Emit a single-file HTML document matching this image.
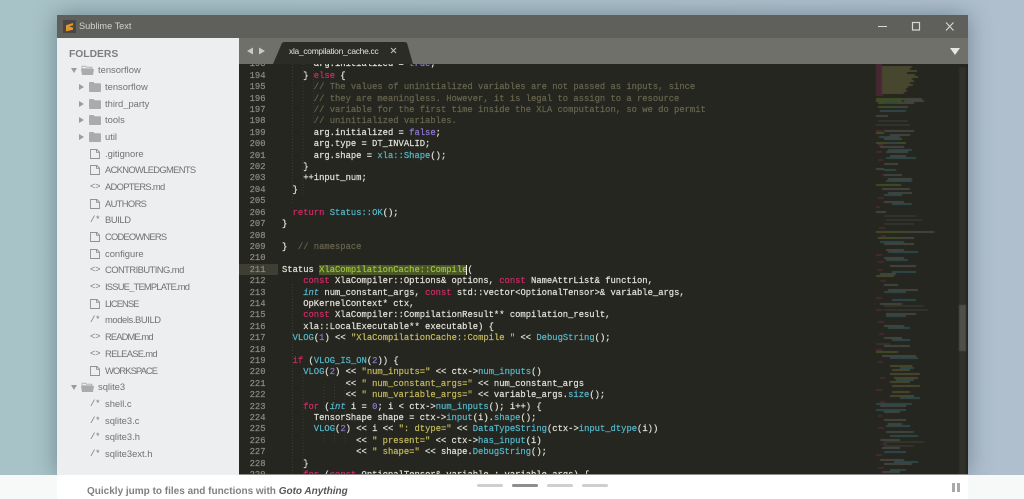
<!DOCTYPE html>
<html><head><meta charset="utf-8"><title>Sublime Text</title>
<style>
html,body{margin:0;padding:0}
body{width:1024px;height:499px;overflow:hidden;position:relative;background:linear-gradient(90deg,#a8c3c8 0,#aac1c9 40%,#b0bfce 100%);font-family:"Liberation Sans",sans-serif}
.a{position:absolute}
#win{left:57px;top:15px;width:911px;height:460px;background:#25261f;box-shadow:0 0 22px rgba(40,60,70,.45)}
#title{left:57px;top:15px;width:911px;height:23px;background:#5f5f5c}
#tabs{left:239px;top:38px;width:729px;height:26px;background:#70706a}
#side{left:57px;top:38px;width:182px;height:437px;background:#eceef0}
#foot{left:0;top:475px;width:1024px;height:24px;background:#f7f8f8}
#foot2{left:57px;top:475px;width:911px;height:24px;background:#fff;border-top:1px solid #fff;box-sizing:border-box}
.r{height:16.7px;line-height:16.7px;font-size:9.4px;color:#707274;position:relative;padding-left:48px;white-space:nowrap;filter:blur(.25px)}
.r svg,.r b{position:absolute}
.r b{left:33px;font:9px/16.7px "Liberation Mono",monospace;color:#77797b;top:0;letter-spacing:-.3px}
.r.i{padding-left:41px}
#code,#nums{font:8.83px/11.4px "Liberation Mono",monospace;white-space:pre;color:#e2e2da;margin:0;filter:blur(.25px);-webkit-text-stroke:.2px}
#clip{left:239px;top:64px;width:630px;height:411px;overflow:hidden}
#nums{left:0;top:-4.6px;width:26.5px;text-align:right;color:#8b8b84}
#code{left:43px;top:-4.6px}
.k{color:#cf2a68}.t{color:#55b8cc}.ti{color:#55b8cc;font-style:italic}.c{color:#67654f}.s{color:#c4b95c}.n{color:#9277d6}
.sel{background:#4a5628;color:#9dc23a}
</style></head><body>
<div class="a" id="win"></div>
<div class="a" id="title"></div>
<div class="a" id="tabs"></div>
<svg class="a" style="left:63px;top:20px" width="13" height="13" viewBox="0 0 13 13"><rect width="13" height="13" fill="#474744"/><path d="M3 5.2 10 3v2.2L3 7.4zM3 7.6l7 2.2-7 1.6zM3 5.4l7 2.2V9.800L3 7.600z" fill="#e8952c"/></svg>
<div class="a" style="left:79px;top:20px;font-size:9.2px;line-height:13px;color:#d2d2ce;filter:blur(.2px)">Sublime Text</div>
<svg class="a" style="left:870px;top:15px" width="98" height="23" viewBox="0 0 98 23" fill="none" stroke="#d8d8d5"><path d="M8 11.500h9" stroke-width="1"/><rect x="42.500" y="7.500" width="7" height="7.500" stroke-width="1.200"/><path d="M76 7.500l7.500 8M83.500 7.500l-7.500 8" stroke-width="1.100"/></svg>

<svg class="a" style="left:239px;top:38px" width="729" height="26" viewBox="0 0 729 26"><path d="M34 26 43 5Q44 4 46 4H165Q167 4 168 5L174 26z" fill="#2b2c26"/><path d="M8 13l6-3.500v7zM26 13l-6-3.500v7z" fill="#c9c9c5"/><path d="M711 10h10l-5 7z" fill="#e6e6e3"/></svg>
<div class="a" style="left:289px;top:44px;font-size:8.4px;letter-spacing:-.25px;line-height:14px;color:#e4e4df;filter:blur(.2px);white-space:nowrap">xla_compilation_cache.cc</div>
<svg class="a" style="left:390px;top:47px" width="8" height="8" fill="none" stroke="#bdbdb8" stroke-width="1.100"><path d="M1 1l5 5M6 1l-5 5"/></svg>

<div class="a" id="side">
<div class="a" style="left:12px;top:10px;font-size:10.300px;font-weight:bold;line-height:14px;color:#7c7e80;filter:blur(.2px)">FOLDERS</div>
</div>
<svg width="0" height="0" style="position:absolute"><defs>
<symbol id="fo" viewBox="0 0 12 10"><path d="M0 1Q0 0 1 0H4.500L5.500 1.300H11Q12 1.300 12 2.300V9Q12 10 11 10H1Q0 10 0 9z" fill="#a9abad"/></symbol>
<symbol id="op" viewBox="0 0 13 10"><path d="M1 1.200H4.500L5.500 2.200H11V3.800H1z" fill="none" stroke="#a9abad" stroke-width=".8"/><path d="M0 4H13L12 10H1z" fill="#a9abad"/></symbol>
<symbol id="fi" viewBox="0 0 10 10"><path d="M.5.500H7L9.500 3V9.500H.5zM6.500.500V3.300H9.500" fill="none" stroke="#8f9193" stroke-width=".9"/></symbol>
<symbol id="rt" viewBox="0 0 5 6"><path d="M0 0 5 3 0 6z" fill="#9a9c9e"/></symbol>
<symbol id="dn" viewBox="0 0 6 5"><path d="M0 0H6L3 5z" fill="#9a9c9e"/></symbol>
</defs></svg>
<div class="a" style="left:57px;top:62.150px;width:182px">
<div class="r i"><svg style="left:14px;top:6px" width="6" height="5"><use href="#dn"/></svg><svg style="left:24px;top:3px" width="13" height="10"><use href="#op"/></svg>tensorflow</div>
<div class="r"><svg style="left:22px;top:5px" width="5" height="6"><use href="#rt"/></svg><svg style="left:32px;top:3px" width="12" height="10"><use href="#fo"/></svg>tensorflow</div>
<div class="r"><svg style="left:22px;top:5px" width="5" height="6"><use href="#rt"/></svg><svg style="left:32px;top:3px" width="12" height="10"><use href="#fo"/></svg>third_party</div>
<div class="r"><svg style="left:22px;top:5px" width="5" height="6"><use href="#rt"/></svg><svg style="left:32px;top:3px" width="12" height="10"><use href="#fo"/></svg>tools</div>
<div class="r"><svg style="left:22px;top:5px" width="5" height="6"><use href="#rt"/></svg><svg style="left:32px;top:3px" width="12" height="10"><use href="#fo"/></svg>util</div>
<div class="r"><svg style="left:33px;top:3px" width="10" height="10"><use href="#fi"/></svg>.gitignore</div>
<div class="r" style="letter-spacing:-.67px"><svg style="left:33px;top:3px" width="10" height="10"><use href="#fi"/></svg>ACKNOWLEDGMENTS</div>
<div class="r" style="letter-spacing:-.7px"><b>&lt;&gt;</b>ADOPTERS.md</div>
<div class="r" style="letter-spacing:-.65px"><svg style="left:33px;top:3px" width="10" height="10"><use href="#fi"/></svg>AUTHORS</div>
<div class="r" style="letter-spacing:-.4px"><b>/*</b>BUILD</div>
<div class="r" style="letter-spacing:-.8px"><svg style="left:33px;top:3px" width="10" height="10"><use href="#fi"/></svg>CODEOWNERS</div>
<div class="r"><svg style="left:33px;top:3px" width="10" height="10"><use href="#fi"/></svg>configure</div>
<div class="r" style="letter-spacing:-.55px"><b>&lt;&gt;</b>CONTRIBUTING.md</div>
<div class="r" style="letter-spacing:-.8px"><b>&lt;&gt;</b>ISSUE_TEMPLATE.md</div>
<div class="r" style="letter-spacing:-.95px"><svg style="left:33px;top:3px" width="10" height="10"><use href="#fi"/></svg>LICENSE</div>
<div class="r" style="letter-spacing:-.4px"><b>/*</b>models.BUILD</div>
<div class="r" style="letter-spacing:-.9px"><b>&lt;&gt;</b>README.md</div>
<div class="r" style="letter-spacing:-.7px"><b>&lt;&gt;</b>RELEASE.md</div>
<div class="r" style="letter-spacing:-.9px"><svg style="left:33px;top:3px" width="10" height="10"><use href="#fi"/></svg>WORKSPACE</div>
<div class="r i"><svg style="left:14px;top:6px" width="6" height="5"><use href="#dn"/></svg><svg style="left:24px;top:3px" width="13" height="10"><use href="#op"/></svg>sqlite3</div>
<div class="r"><b>/*</b>shell.c</div>
<div class="r"><b>/*</b>sqlite3.c</div>
<div class="r"><b>/*</b>sqlite3.h</div>
<div class="r"><b>/*</b>sqlite3ext.h</div>
</div>

<div class="a" id="clip">
<div class="a" style="left:0;top:200px;width:39px;height:11.400px;background:#3e3e34"></div>
<svg class="a" style="left:43px;top:0" width="120" height="411" stroke="#3a3b32" stroke-width="1" stroke-dasharray="1 2"><path d="M10.500 0V140M21 0V130M10.500 220V411M21 310V411M31.500 0V60M42 320V380M52.500 320V380M63 320V380"/></svg>
<pre class="a" id="nums">193
194
195
196
197
198
199
200
201
202
203
204
205
206
207
208
209
210
211
212
213
214
215
216
217
218
219
220
221
222
223
224
225
226
227
228
229</pre>
<pre class="a" id="code">      arg.initialized = <span class="n">true</span>;
    } <span class="k">else</span> {
      <span class="c">// The values of uninitialized variables are not passed as inputs, since</span>
      <span class="c">// they are meaningless. However, it is legal to assign to a resource</span>
      <span class="c">// variable for the first time inside the XLA computation, so we do permit</span>
      <span class="c">// uninitialized variables.</span>
      arg.initialized = <span class="n">false</span>;
      arg.type = DT_INVALID;
      arg.shape = <span class="t">xla::Shape</span>();
    }
    ++input_num;
  }

  <span class="k">return</span> <span class="t">Status::OK</span>();
}

}  <span class="c">// namespace</span>

Status <span class="sel">XlaCompilationCache::Compile</span><span style="border-left:1px solid #f2f2ee;margin-left:-1px">(</span>
    <span class="k">const</span> XlaCompiler::Options&amp; options, <span class="k">const</span> NameAttrList&amp; function,
    <span class="ti">int</span> num_constant_args, <span class="k">const</span> std::vector&lt;OptionalTensor&gt;&amp; variable_args,
    OpKernelContext* ctx,
    <span class="k">const</span> XlaCompiler::CompilationResult** compilation_result,
    xla::LocalExecutable** executable) {
  <span class="t">VLOG</span>(<span class="n">1</span>) &lt;&lt; <span class="s">"XlaCompilationCache::Compile "</span> &lt;&lt; <span class="t">DebugString</span>();

  <span class="k">if</span> (<span class="t">VLOG_IS_ON</span>(<span class="n">2</span>)) {
    <span class="t">VLOG</span>(<span class="n">2</span>) &lt;&lt; <span class="s">"num_inputs="</span> &lt;&lt; ctx-&gt;<span class="t">num_inputs</span>()
            &lt;&lt; <span class="s">" num_constant_args="</span> &lt;&lt; num_constant_args
            &lt;&lt; <span class="s">" num_variable_args="</span> &lt;&lt; variable_args.<span class="t">size</span>();
    <span class="k">for</span> (<span class="ti">int</span> i = <span class="n">0</span>; i &lt; ctx-&gt;<span class="t">num_inputs</span>(); i++) {
      TensorShape shape = ctx-&gt;<span class="t">input</span>(i).<span class="t">shape</span>();
      <span class="t">VLOG</span>(<span class="n">2</span>) &lt;&lt; i &lt;&lt; <span class="s">": dtype="</span> &lt;&lt; <span class="t">DataTypeString</span>(ctx-&gt;<span class="t">input_dtype</span>(i))
              &lt;&lt; <span class="s">" present="</span> &lt;&lt; ctx-&gt;<span class="t">has_input</span>(i)
              &lt;&lt; <span class="s">" shape="</span> &lt;&lt; shape.<span class="t">DebugString</span>();
    }
    <span class="k">for</span> (<span class="k">const</span> OptionalTensor&amp; variable : variable_args) {</pre>
</div>

<svg class="a" style="left:870px;top:64px;filter:blur(.4px)" width="98" height="411" viewBox="870 64 98 411" fill="none" stroke-width="1">
<rect x="959" y="67" width="7" height="408" fill="#30312b"/>
<rect x="959" y="305" width="7" height="46" fill="#4e4f48"/>
<g opacity=".72">
<path stroke="#8a2a54" d="M876 65h6M876 67h6M876 69h6M876 71h6M876 73h6M876 75h6M876 77h6M876 79h6M876 81h6M876 83h6M876 85h6M876 87h6M876 89h6M876 91h6M876 93h6M876 95h7M878 137h4M878 145h5M876 131h6M876 152h6M878 160h5M882 175h6M880 185h5M878 198h6M876 207h4M879 228h6M881 236h5M876 255h6M878 262h6M878 270h4M880 281h6M876 298h6M876 310h6M878 322h6M879 334h5M876 350h6M878 362h5M880 378h5M876 390h6M880 402h5M878 416h4M878 428h6M882 444h5M876 455h6M878 468h6"/>
<path stroke="#83834a" d="M882 67h30M882 69h28M882 71h35M882 73h25M882 75h33M882 77h36M882 79h30M882 81h32M882 83h28M882 85h31M882 87h26M882 89h24M882 91h25M882 93h22M890 366h22M892 370h18M890 374h30M894 378h24M890 382h20M892 386h28M892 392h18M890 396h24"/>
<path stroke="#6f8f2c" d="M876 99h30M876 101h26M878 103h22M878 107h18M876 133h8M876 143h30M876 185h25M876 232h28M878 238h20M876 276h18M876 352h22"/>
<path stroke="#7a7a73" d="M906 99h16M904 101h20M900 103h14M896 107h12M880 111h20M876 116h12M884 131h30M890 135h20M884 139h18M880 147h24M886 152h22M890 156h16M884 164h14M876 169h8M884 175h18M888 179h24M882 189h28M888 193h24M884 202h20M876 212h10M904 232h30M898 238h16M884 244h30M886 250h18M884 258h20M890 266h26M880 274h16M884 285h14M888 290h30M880 304h22M886 314h30M884 326h20M884 338h18M884 346h26M882 356h34M880 406h26M884 412h16M884 420h22M888 424h14M886 432h28M880 440h20M882 448h18M880 460h24M884 464h28M882 472h18"/>
<path stroke="#3f8496" d="M884 103h14M882 111h24M880 137h20M888 143h10M888 150h24M886 158h30M884 170h12M886 181h26M884 195h18M892 204h20M880 242h24M888 252h30M886 260h22M892 272h24M884 292h22M892 300h24M886 316h20M888 328h22M892 340h18M890 358h28M900 368h14M896 380h18M900 398h20M876 404h36M876 410h30M886 426h24M890 436h28M884 452h22M894 462h24M890 470h16"/>
<path stroke="#4c4b40" d="M878 121h30M876 125h34M884 216h32M886 220h36M884 224h30M884 306h40M884 310h44M876 344h14M884 442h40M884 446h30"/>
</g>
</svg>

<div class="a" style="left:239px;top:474px;width:729px;height:1px;background:#8c8c88"></div>
<div class="a" id="foot"></div>
<div class="a" id="foot2"></div>
<div class="a" style="left:87px;top:485px;font-size:10px;line-height:14px;font-weight:bold;color:#7e8082;white-space:nowrap;filter:blur(.2px)">Quickly jump to files and functions with <i style="color:#55575a">Goto Anything</i></div>
<div class="a" style="left:477px;top:484px;width:26px;height:3px;background:#cfcfcf;border-radius:2px"></div>
<div class="a" style="left:512px;top:484px;width:26px;height:3px;background:#8e8e8e;border-radius:2px"></div>
<div class="a" style="left:547px;top:484px;width:26px;height:3px;background:#cfcfcf;border-radius:2px"></div>
<div class="a" style="left:582px;top:484px;width:26px;height:3px;background:#cfcfcf;border-radius:2px"></div>
<div class="a" style="left:952px;top:483px;width:3px;height:9px;background:#a9a9a9"></div>
<div class="a" style="left:957px;top:483px;width:3px;height:9px;background:#a9a9a9"></div>
</body></html>
